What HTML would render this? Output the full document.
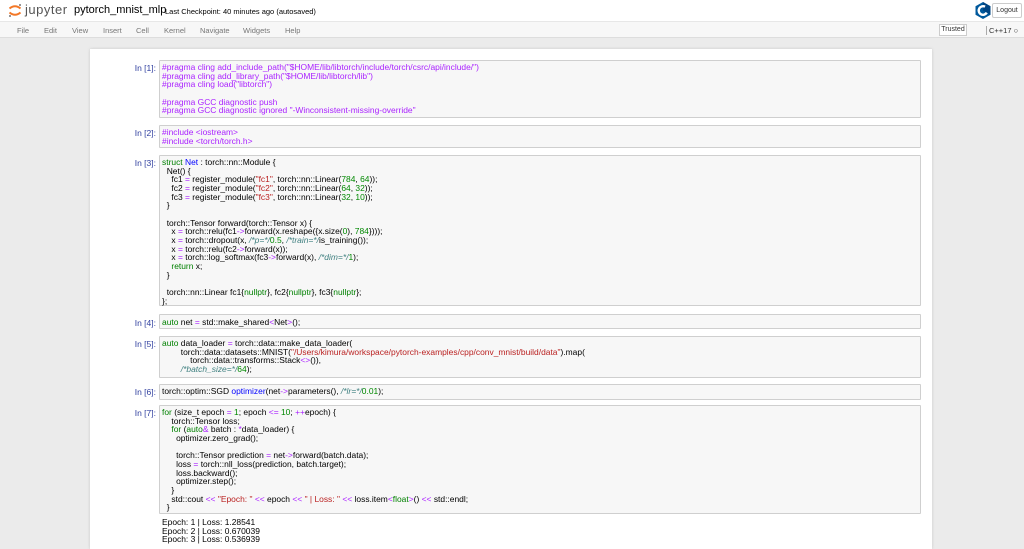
<!DOCTYPE html>
<html><head><meta charset="utf-8"><style>
*{margin:0;padding:0;box-sizing:border-box}
body{width:1024px;height:544px;overflow:hidden;background:#ebebeb;font-family:"Liberation Sans",sans-serif;position:relative}
#hdr{position:absolute;left:0;top:0;width:1024px;height:21px;background:#fff}
#menu{position:absolute;left:0;top:21px;width:1024px;height:17px;background:#f7f7f7;border-top:1px solid #e7e7e7;border-bottom:1px solid #ddd}
#menu span{position:absolute;top:4px;font-size:7.5px;color:#777}
#nb{position:absolute;left:90px;top:49px;width:842px;height:500px;background:#fff;box-shadow:0 0 3px rgba(0,0,0,.15)}
.p{position:absolute;text-align:right;font-size:8.5px;color:#303f9f;left:86px;width:70px}
.c{position:absolute;left:159px;width:762px;background:#f7f7f7;border:1px solid #cfcfcf;border-radius:1px}
.t{position:absolute;left:162px;font-size:8.45px;line-height:8.65px;color:#000;white-space:pre}
.k{color:#008000}.m{color:#aa22ff}.o{color:#aa22ff}.s{color:#ba2121}.n{color:#080}.d{color:#0000ff}.cm{color:#408080;font-style:italic}
</style></head><body>
<div id="hdr">
<svg style="position:absolute;left:8px;top:3px" width="14" height="15" viewBox="0 0 14 15"><path d="M1.5 5.5 Q7 1 12.5 5.5" stroke="#f37726" stroke-width="2" fill="none"/><path d="M1.5 9.5 Q7 14 12.5 9.5" stroke="#f37726" stroke-width="2" fill="none"/><circle cx="12" cy="2" r="1" fill="#767677"/><circle cx="2" cy="13" r="1" fill="#767677"/></svg>
<span style="position:absolute;left:25px;top:2px;font-size:13px;color:#555;letter-spacing:.5px">jupyter</span>
<span style="position:absolute;left:74px;top:4px;font-size:11px;color:#000">pytorch_mnist_mlp</span>
<span style="position:absolute;left:165px;top:7px;font-size:7.5px;color:#000">Last Checkpoint: 40 minutes ago (autosaved)</span>
<svg style="position:absolute;left:975px;top:2px" width="16" height="17" viewBox="0 0 16 17"><polygon points="8,0 15.5,4.25 15.5,12.75 8,17 0.5,12.75 0.5,4.25" fill="#00599c"/><polygon points="8,0 15.5,4.25 15.5,12.75 8,8.5" fill="#004482"/><circle cx="8" cy="8.5" r="4.3" fill="none" stroke="#fff" stroke-width="2.4" stroke-dasharray="20 7" transform="rotate(30 8 8.5)"/></svg>
<div style="position:absolute;left:992px;top:3px;width:30px;height:15px;border:1px solid #ccc;border-radius:2px;font-size:7px;text-align:center;line-height:13px;color:#333">Logout</div>
</div>
<div id="menu">
<span style="left:17px">File</span><span style="left:44px">Edit</span><span style="left:72px">View</span><span style="left:103px">Insert</span><span style="left:136px">Cell</span><span style="left:164px">Kernel</span><span style="left:200px">Navigate</span><span style="left:243px">Widgets</span><span style="left:285px">Help</span>
<div style="position:absolute;left:939px;top:2px;width:28px;height:12px;border:1px solid #ccc;background:#fff;font-size:7px;color:#333;text-align:center;line-height:10px">Trusted</div>
<span style="left:986px;top:4px;color:#333;border-left:1px solid #aaa;padding-left:2px">C++17 ○</span>
</div>
<div id="nb"></div>

<div class="p" style="top:63px">In [1]:</div>
<div class="c" style="top:60px;height:58px"></div>
<div class="t m" style="top:63px">#pragma cling add_include_path("$HOME/lib/libtorch/include/torch/csrc/api/include/")
#pragma cling add_library_path("$HOME/lib/libtorch/lib")
#pragma cling load("libtorch")

#pragma GCC diagnostic push
#pragma GCC diagnostic ignored "-Winconsistent-missing-override"</div>

<div class="p" style="top:128px">In [2]:</div>
<div class="c" style="top:125px;height:23px"></div>
<div class="t m" style="top:128px">#include &lt;iostream&gt;
#include &lt;torch/torch.h&gt;</div>

<div class="p" style="top:158px">In [3]:</div>
<div class="c" style="top:155px;height:151px"></div>
<div class="t" style="top:158px"><span class="k">struct</span> <span class="d">Net</span> : torch::nn::Module {
  Net() {
    fc1 <span class="o">=</span> register_module(<span class="s">"fc1"</span>, torch::nn::Linear(<span class="n">784</span>, <span class="n">64</span>));
    fc2 <span class="o">=</span> register_module(<span class="s">"fc2"</span>, torch::nn::Linear(<span class="n">64</span>, <span class="n">32</span>));
    fc3 <span class="o">=</span> register_module(<span class="s">"fc3"</span>, torch::nn::Linear(<span class="n">32</span>, <span class="n">10</span>));
  }

  torch::Tensor forward(torch::Tensor x) {
    x <span class="o">=</span> torch::relu(fc1<span class="o">-&gt;</span>forward(x.reshape({x.size(<span class="n">0</span>), <span class="n">784</span>})));
    x <span class="o">=</span> torch::dropout(x, <span class="cm">/*p=*/</span><span class="n">0.5</span>, <span class="cm">/*train=*/</span>is_training());
    x <span class="o">=</span> torch::relu(fc2<span class="o">-&gt;</span>forward(x));
    x <span class="o">=</span> torch::log_softmax(fc3<span class="o">-&gt;</span>forward(x), <span class="cm">/*dim=*/</span><span class="n">1</span>);
    <span class="k">return</span> x;
  }

  torch::nn::Linear fc1{<span class="k">nullptr</span>}, fc2{<span class="k">nullptr</span>}, fc3{<span class="k">nullptr</span>};
};</div>

<div class="p" style="top:318px">In [4]:</div>
<div class="c" style="top:314px;height:15px"></div>
<div class="t" style="top:318px"><span class="k">auto</span> net <span class="o">=</span> std::make_shared<span class="o">&lt;</span>Net<span class="o">&gt;</span>();</div>

<div class="p" style="top:339px">In [5]:</div>
<div class="c" style="top:336px;height:42px"></div>
<div class="t" style="top:339px"><span class="k">auto</span> data_loader <span class="o">=</span> torch::data::make_data_loader(
        torch::data::datasets::MNIST(<span class="s">"/Users/kimura/workspace/pytorch-examples/cpp/conv_mnist/build/data"</span>).map(
            torch::data::transforms::Stack<span class="o">&lt;&gt;</span>()),
        <span class="cm">/*batch_size=*/</span><span class="n">64</span>);</div>

<div class="p" style="top:387px">In [6]:</div>
<div class="c" style="top:384px;height:16px"></div>
<div class="t" style="top:387px">torch::optim::SGD <span class="d">optimizer</span>(net<span class="o">-&gt;</span>parameters(), <span class="cm">/*lr=*/</span><span class="n">0.01</span>);</div>

<div class="p" style="top:408px">In [7]:</div>
<div class="c" style="top:405px;height:109px"></div>
<div class="t" style="top:408px"><span class="k">for</span> (size_t epoch <span class="o">=</span> <span class="n">1</span>; epoch <span class="o">&lt;=</span> <span class="n">10</span>; <span class="o">++</span>epoch) {
    torch::Tensor loss;
    <span class="k">for</span> (<span class="k">auto</span><span class="o">&amp;</span> batch : <span class="o">*</span>data_loader) {
      optimizer.zero_grad();

      torch::Tensor prediction <span class="o">=</span> net<span class="o">-&gt;</span>forward(batch.data);
      loss <span class="o">=</span> torch::nll_loss(prediction, batch.target);
      loss.backward();
      optimizer.step();
    }
    std::cout <span class="o">&lt;&lt;</span> <span class="s">"Epoch: "</span> <span class="o">&lt;&lt;</span> epoch <span class="o">&lt;&lt;</span> <span class="s">" | Loss: "</span> <span class="o">&lt;&lt;</span> loss.item<span class="o">&lt;</span><span class="k">float</span><span class="o">&gt;</span>() <span class="o">&lt;&lt;</span> std::endl;
  }</div>
<div class="t" style="top:518px">Epoch: 1 | Loss: 1.28541
Epoch: 2 | Loss: 0.670039
Epoch: 3 | Loss: 0.536939</div>
</body></html>
